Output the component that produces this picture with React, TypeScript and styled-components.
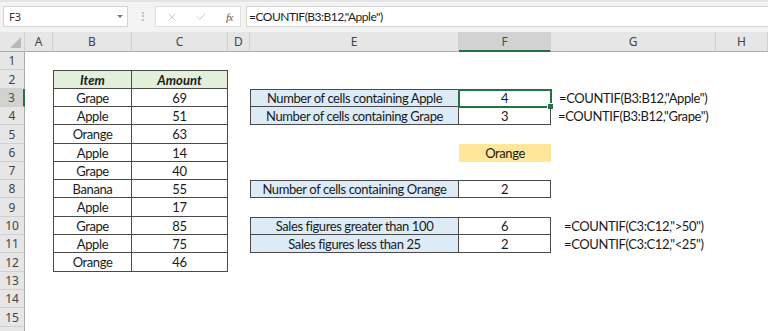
import React from "react";
import styled, { createGlobalStyle, css } from "styled-components";
import { X, Check } from "lucide-react";

const GlobalStyle = createGlobalStyle`
  html, body {
    margin: 0;
    padding: 0;
    background: #ffffff;
    overflow: hidden;
  }
  body {
    font-family: "Lato", "Liberation Sans", sans-serif;
  }
`;

const COLS = ["A", "B", "C", "D", "E", "F", "G", "H"];
// row header, then A..G; H takes the rest
const COL_WIDTHS = [25, 28, 79, 96, 22, 209, 92, 165];
const ROW_HEIGHTS = [18, 19, 18, 18, 19, 18, 18, 18, 19, 18, 18, 19, 18, 18, 19, 18];

const Window = styled.div`
  width: 768px;
  height: 331px;
  overflow: hidden;
  display: flex;
  flex-direction: column;
  background: #ffffff;
`;

const FormulaBar = styled.div`
  height: 32px;
  flex-shrink: 0;
  background: #f3f3f3;
  border-top: 2px solid #e4e4e4;
  box-sizing: border-box;
  display: flex;
  align-items: flex-start;
  padding-top: 4px;
  padding-left: 3px;
`;

const NameBox = styled.div`
  width: 125px;
  height: 21px;
  box-sizing: border-box;
  background: #ffffff;
  border: 1px solid #d4d4d4;
  display: flex;
  align-items: center;
  justify-content: space-between;
  padding: 0 4px 0 5px;
  font-family: "Noto Sans", "Liberation Sans", sans-serif;
  font-size: 11px;
  color: #333333;
`;

const DropArrow = styled.span`
  width: 0;
  height: 0;
  border-left: 3px solid transparent;
  border-right: 3px solid transparent;
  border-top: 3px solid #7a7a7a;
`;

const Grip = styled.div`
  width: 0;
  height: 9px;
  margin: 6px 11px 0 14px;
  border-left: 2px dotted #c2c2c2;
`;

const IconBox = styled.div`
  width: 86px;
  height: 21px;
  box-sizing: border-box;
  background: #ffffff;
  border: 1px solid #dedede;
  display: flex;
  align-items: center;
  padding-left: 10px;
  gap: 17px;
  color: #b8b8b8;
`;

const Fx = styled.span`
  font-family: "Liberation Serif", serif;
  font-style: italic;
  font-size: 11px;
  color: #5a5a5a;
  letter-spacing: -0.5px;
  margin-left: 2px;
`;

const FormulaInput = styled.div`
  flex: 1;
  height: 21px;
  margin-left: 5px;
  box-sizing: border-box;
  background: #ffffff;
  border: 1px solid #d4d4d4;
  border-right: none;
  display: flex;
  align-items: center;
  padding-left: 2px;
  font-family: "Lato", "Liberation Sans", sans-serif;
  font-size: 12px;
  letter-spacing: -0.5px;
  color: #222222;
`;

const Sheet = styled.div`
  display: grid;
  grid-template-columns: ${COL_WIDTHS.map((w) => `${w}px`).join(" ")} 1fr;
  grid-template-rows: 20px ${ROW_HEIGHTS.map((h) => `${h}px`).join(" ")};
`;

const Corner = styled.div`
  background: #e6e6e6;
  border-right: 1px solid #cfcfcf;
  border-bottom: 1px solid #ababab;
  box-sizing: border-box;
  position: relative;
  &::after {
    content: "";
    position: absolute;
    right: 3px;
    bottom: 3px;
    width: 0;
    height: 0;
    border-left: 11px solid transparent;
    border-bottom: 11px solid #b9b9b9;
  }
`;

const ColHead = styled.div<{ $active?: boolean }>`
  background: ${(p) => (p.$active ? "#d2d2d2" : "#e6e6e6")};
  border-right: 1px solid #cfcfcf;
  border-bottom: ${(p) => (p.$active ? "2px solid #217346" : "1px solid #ababab")};
  box-sizing: border-box;
  display: flex;
  align-items: center;
  justify-content: center;
  font-family: "Noto Sans", "Liberation Sans", sans-serif;
  font-size: 12px;
  color: ${(p) => (p.$active ? "#2f5f43" : "#444444")};
`;

const RowHead = styled.div<{ $active?: boolean }>`
  background: ${(p) => (p.$active ? "#d2d2d2" : "#e6e6e6")};
  border-right: ${(p) => (p.$active ? "2px solid #217346" : "1px solid #ababab")};
  border-bottom: 1px solid #d0d0d0;
  box-sizing: border-box;
  display: flex;
  align-items: center;
  justify-content: center;
  font-family: "Noto Sans", "Liberation Sans", sans-serif;
  font-size: 12px;
  color: ${(p) => (p.$active ? "#2f5f43" : "#444444")};
`;

type CellSpec = {
  text?: string;
  fill?: string;
  bold?: boolean;
  italic?: boolean;
  align?: "center" | "left";
  pad?: number;
  top?: boolean;
  left?: boolean;
  boxed?: boolean;
  selected?: boolean;
};

const Cell = styled.div<{
  $fill?: string;
  $bold?: boolean;
  $italic?: boolean;
  $align?: string;
  $pad?: number;
  $boxed?: boolean;
  $top?: boolean;
  $left?: boolean;
}>`
  position: relative;
  box-sizing: border-box;
  background: ${(p) => p.$fill || "transparent"};
  display: flex;
  align-items: center;
  justify-content: ${(p) => (p.$align === "left" ? "flex-start" : "center")};
  padding-left: ${(p) => p.$pad || 0}px;
  white-space: nowrap;
  font-size: 13px;
  letter-spacing: ${(p) => (p.$bold ? "0" : "-0.4px")};
  color: #1a1a1a;
  font-weight: ${(p) => (p.$bold ? 700 : 400)};
  font-style: ${(p) => (p.$italic ? "italic" : "normal")};
  ${(p) =>
    p.$boxed &&
    css`
      border-right: 1px solid #4a4a4a;
      border-bottom: 1px solid #4a4a4a;
    `}
  ${(p) => p.$top && "border-top: 1px solid #4a4a4a;"}
  ${(p) => p.$left && "border-left: 1px solid #4a4a4a;"}
`;

const Selection = styled.div`
  position: absolute;
  top: -1px;
  left: -1px;
  right: -2px;
  bottom: -2px;
  border: 2px solid #217346;
  pointer-events: none;
`;

const Handle = styled.div`
  position: absolute;
  right: -4px;
  bottom: -4px;
  width: 5px;
  height: 5px;
  background: #217346;
  border: 1px solid #ffffff;
`;

const GREEN = "#e2efda";
const BLUE = "#ddebf7";
const YELLOW = "#ffe699";

const cells: Record<string, CellSpec> = {};

function box(range: string[][]) {
  range.forEach((row, ri) =>
    row.forEach((ref, ci) => {
      cells[ref] = { ...(cells[ref] || {}), boxed: true, top: ri === 0, left: ci === 0 };
    })
  );
}

const items = ["Grape", "Apple", "Orange", "Apple", "Grape", "Banana", "Apple", "Grape", "Apple", "Orange"];
const amounts = [69, 51, 63, 14, 40, 55, 17, 85, 75, 46];

cells.B2 = { text: "Item", fill: GREEN, bold: true, italic: true };
cells.C2 = { text: "Amount", fill: GREEN, bold: true, italic: true };
items.forEach((it, i) => {
  cells[`B${i + 3}`] = { text: it };
  cells[`C${i + 3}`] = { text: String(amounts[i]) };
});
box(Array.from({ length: 11 }, (_, i) => [`B${i + 2}`, `C${i + 2}`]));

cells.E3 = { text: "Number of cells containing Apple", fill: BLUE };
cells.F3 = { text: "4", selected: true };
cells.E4 = { text: "Number of cells containing Grape", fill: BLUE };
cells.F4 = { text: "3" };
box([["E3", "F3"], ["E4", "F4"]]);

cells.F6 = { text: "Orange", fill: YELLOW };

cells.E8 = { text: "Number of cells containing Orange", fill: BLUE };
cells.F8 = { text: "2" };
box([["E8", "F8"]]);

cells.E10 = { text: "Sales figures greater than 100", fill: BLUE };
cells.F10 = { text: "6" };
cells.E11 = { text: "Sales figures less than 25", fill: BLUE };
cells.F11 = { text: "2" };
box([["E10", "F10"], ["E11", "F11"]]);

cells.G3 = { text: '=COUNTIF(B3:B12,"Apple")', align: "left", pad: 8 };
cells.G4 = { text: '=COUNTIF(B3:B12,"Grape")', align: "left", pad: 7 };
cells.G10 = { text: '=COUNTIF(C3:C12,">50")', align: "left", pad: 13 };
cells.G11 = { text: '=COUNTIF(C3:C12,"<25")', align: "left", pad: 13 };

export default function App() {
  return (
    <Window>
      <GlobalStyle />
      <FormulaBar>
        <NameBox>
          F3
          <DropArrow />
        </NameBox>
        <Grip />
        <IconBox>
          <X size={12} strokeWidth={1.4} />
          <Check size={12} strokeWidth={1.4} />
          <Fx>fx</Fx>
        </IconBox>
        <FormulaInput>=COUNTIF(B3:B12,"Apple")</FormulaInput>
      </FormulaBar>
      <Sheet>
        <Corner />
        {COLS.map((c) => (
          <ColHead key={c} $active={c === "F"}>
            {c}
          </ColHead>
        ))}
        {ROW_HEIGHTS.map((_, ri) => {
          const r = ri + 1;
          return (
            <React.Fragment key={r}>
              <RowHead $active={r === 3}>{r}</RowHead>
              {COLS.map((c) => {
                const spec = cells[`${c}${r}`] || {};
                return (
                  <Cell
                    key={c}
                    $fill={spec.fill}
                    $bold={spec.bold}
                    $italic={spec.italic}
                    $align={spec.align}
                    $pad={spec.pad}
                    $boxed={spec.boxed}
                    $top={spec.top}
                    $left={spec.left}
                  >
                    {spec.text}
                    {spec.selected && (
                      <Selection>
                        <Handle />
                      </Selection>
                    )}
                  </Cell>
                );
              })}
            </React.Fragment>
          );
        })}
      </Sheet>
    </Window>
  );
}
